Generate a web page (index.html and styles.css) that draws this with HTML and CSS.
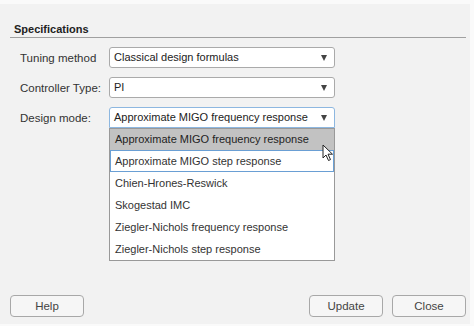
FILE: index.html
```html
<!DOCTYPE html>
<html lang="en">
<head>
    <meta charset="UTF-8">
    <title>Specifications</title>
    <link rel="stylesheet" href="styles.css">
</head>
<body>
    <div class="panel">
        <div class="section-title">Specifications</div>
        <div class="form">
            <div class="row">
                <label class="label">Tuning method</label>
                <div class="select">Classical design formulas<span class="arrow"></span></div>
            </div>
            <div class="row">
                <label class="label">Controller Type:</label>
                <div class="select">PI<span class="arrow"></span></div>
            </div>
            <div class="row">
                <label class="label">Design mode:</label>
                <div class="select select-open">Approximate MIGO frequency response<span class="arrow"></span>
                    <ul class="menu">
                        <li class="item item-hover">Approximate MIGO frequency response</li>
                        <li class="item item-selected">Approximate MIGO step response</li>
                        <li class="item">Chien-Hrones-Reswick</li>
                        <li class="item">Skogestad IMC</li>
                        <li class="item">Ziegler-Nichols frequency response</li>
                        <li class="item">Ziegler-Nichols step response</li>
                    </ul>
                    <svg class="cursor" width="12" height="18" viewBox="0 0 12 18">
                        <path d="M1 1 L1 14 L4 11 L6.5 16.5 L8.5 15.6 L6 10.2 L10.5 10.2 Z" fill="#fff" stroke="#222" stroke-width="1" stroke-linejoin="round"/>
                    </svg>
                </div>
            </div>
        </div>
        <div class="buttons">
            <button class="btn">Help</button>
            <div class="spacer"></div>
            <button class="btn">Update</button>
            <button class="btn">Close</button>
        </div>
    </div>
</body>
</html>
```

FILE: styles.css
```css
html, body { margin: 0; padding: 0; }
body { background-color: #fafafa; font-family: "Liberation Sans", Arial, sans-serif; font-size: 11px; color: #333; width: 474px; height: 326px; overflow: hidden; }
.panel { box-sizing: border-box; width: 470px; height: 320px; margin-top: 4px; background-color: #f2f2f2; padding: 19px 4px 0 10px; display: flex; flex-direction: column; }
.section-title { font-weight: bold; font-size: 11px; color: #222; padding: 0 0 2px 4px; border-bottom: 1px solid #a0a0a0; }
.form { display: flex; flex-direction: column; gap: 9px; padding: 9px 0 0 10px; }
.row { display: flex; align-items: center; height: 21px; }
.label { width: 89px; font-size: 11.5px; color: #333; }
.select { position: relative; box-sizing: border-box; width: 226px; height: 21px; line-height: 19px; padding-left: 4px; background-color: #fff; border: 1px solid #aaa; border-radius: 3px; color: #222; }
.select-open { border-color: #8db7e0; border-radius: 3px 3px 0 0; }
.arrow { position: absolute; right: 7px; top: 7px; width: 0; height: 0; border-left: 3.5px solid transparent; border-right: 3.5px solid transparent; border-top: 6px solid #444; }
.menu { position: absolute; left: -1px; top: 20px; width: 226px; box-sizing: border-box; margin: 0; padding: 0; list-style: none; background-color: #fff; border: 1px solid #999; z-index: 2; }
.item { box-sizing: border-box; height: 22px; line-height: 22px; padding-left: 5px; color: #333; }
.item-hover { height: 21px; line-height: 21px; background-color: #c2c2c2; color: #222; }
.item-selected { border: 1px solid #6a9fd4; padding-left: 4px; line-height: 20px; }
.cursor { position: absolute; left: 212px; top: 36px; z-index: 3; }
.buttons { display: flex; gap: 9px; margin-top: auto; margin-bottom: 7px; }
.spacer { flex: 1; }
.btn { box-sizing: border-box; width: 74px; height: 22px; background-color: #f6f6f6; border: 1px solid #a8a8a8; border-radius: 4px; font-family: "Liberation Sans", Arial, sans-serif; font-size: 11.5px; color: #444; padding: 0; }
```
